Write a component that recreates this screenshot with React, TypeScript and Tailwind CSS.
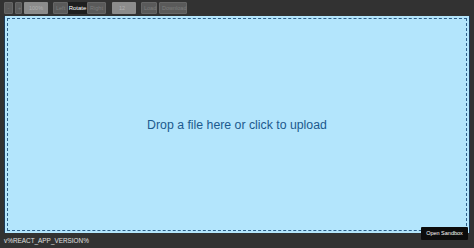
import React from 'react';

const btn =
  'h-[12px] px-[2px] bg-[#5a5a5a] text-[#7c7c7c] text-[5.5px] leading-[10px] border border-[#666] rounded-[1px]';
const field =
  'h-[12px] w-[24px] bg-[#8c8c8c] text-[#b0b0b0] text-[5.5px] leading-[12px] rounded-[1px]';

export default function App() {
  return (
    <div className="relative w-[474px] h-[248px] bg-[#323232] flex flex-col font-['Liberation_Sans',Arial,sans-serif] overflow-hidden">
      {/* toolbar */}
      <div className="h-[16px] flex items-center pl-[4px] gap-[4px]">
        <div className="flex gap-[2px]">
          <button className={`${btn} w-[9px]`}>-</button>
          <button className={`${btn} w-[7px]`}>+</button>
          <div className={`${field} text-center`}>100%</div>
        </div>
        <div className="flex items-center ml-[1px]">
          <button className={`${btn} w-[15px]`}>Left</button>
          <span className="h-[12px] w-[19px] text-center bg-[#1e1e1e] text-white text-[6px] leading-[12px]">Rotate</span>
          <button className={`${btn} w-[19px]`}>Right</button>
        </div>
        <div className={`${field} pl-[7px] ml-[2px]`}>12</div>
        <div className="flex gap-[2px] ml-[1px]">
          <button className={`${btn} w-[16px]`}>Load</button>
          <button className={`${btn} w-[28px]`}>Download</button>
        </div>
      </div>

      {/* drop zone */}
      <div className="mx-[4px] h-[218px] bg-[#b3e5fc] border-l border-r border-[#1b3a5a] relative flex items-center justify-center cursor-pointer">
        <div className="absolute inset-[2px] border border-dashed border-[#2d5f8a] pointer-events-none" />
        <span className="text-[12.3px] text-[#1c5a8e] mt-[2px]">Drop a file here or click to upload</span>
      </div>

      {/* footer */}
      <div className="flex-1 flex items-start pl-[4px]">
        <span className="text-[6.4px] leading-[14px] text-[#e0e0e0] mt-[1px]">v%REACT_APP_VERSION%</span>
      </div>
      <button className="absolute left-[421px] top-[227px] h-[13px] w-[47px] bg-[#0c0c0c] text-white text-[5.5px] leading-[13px] rounded-[1px]">
        Open Sandbox
      </button>
    </div>
  );
}
